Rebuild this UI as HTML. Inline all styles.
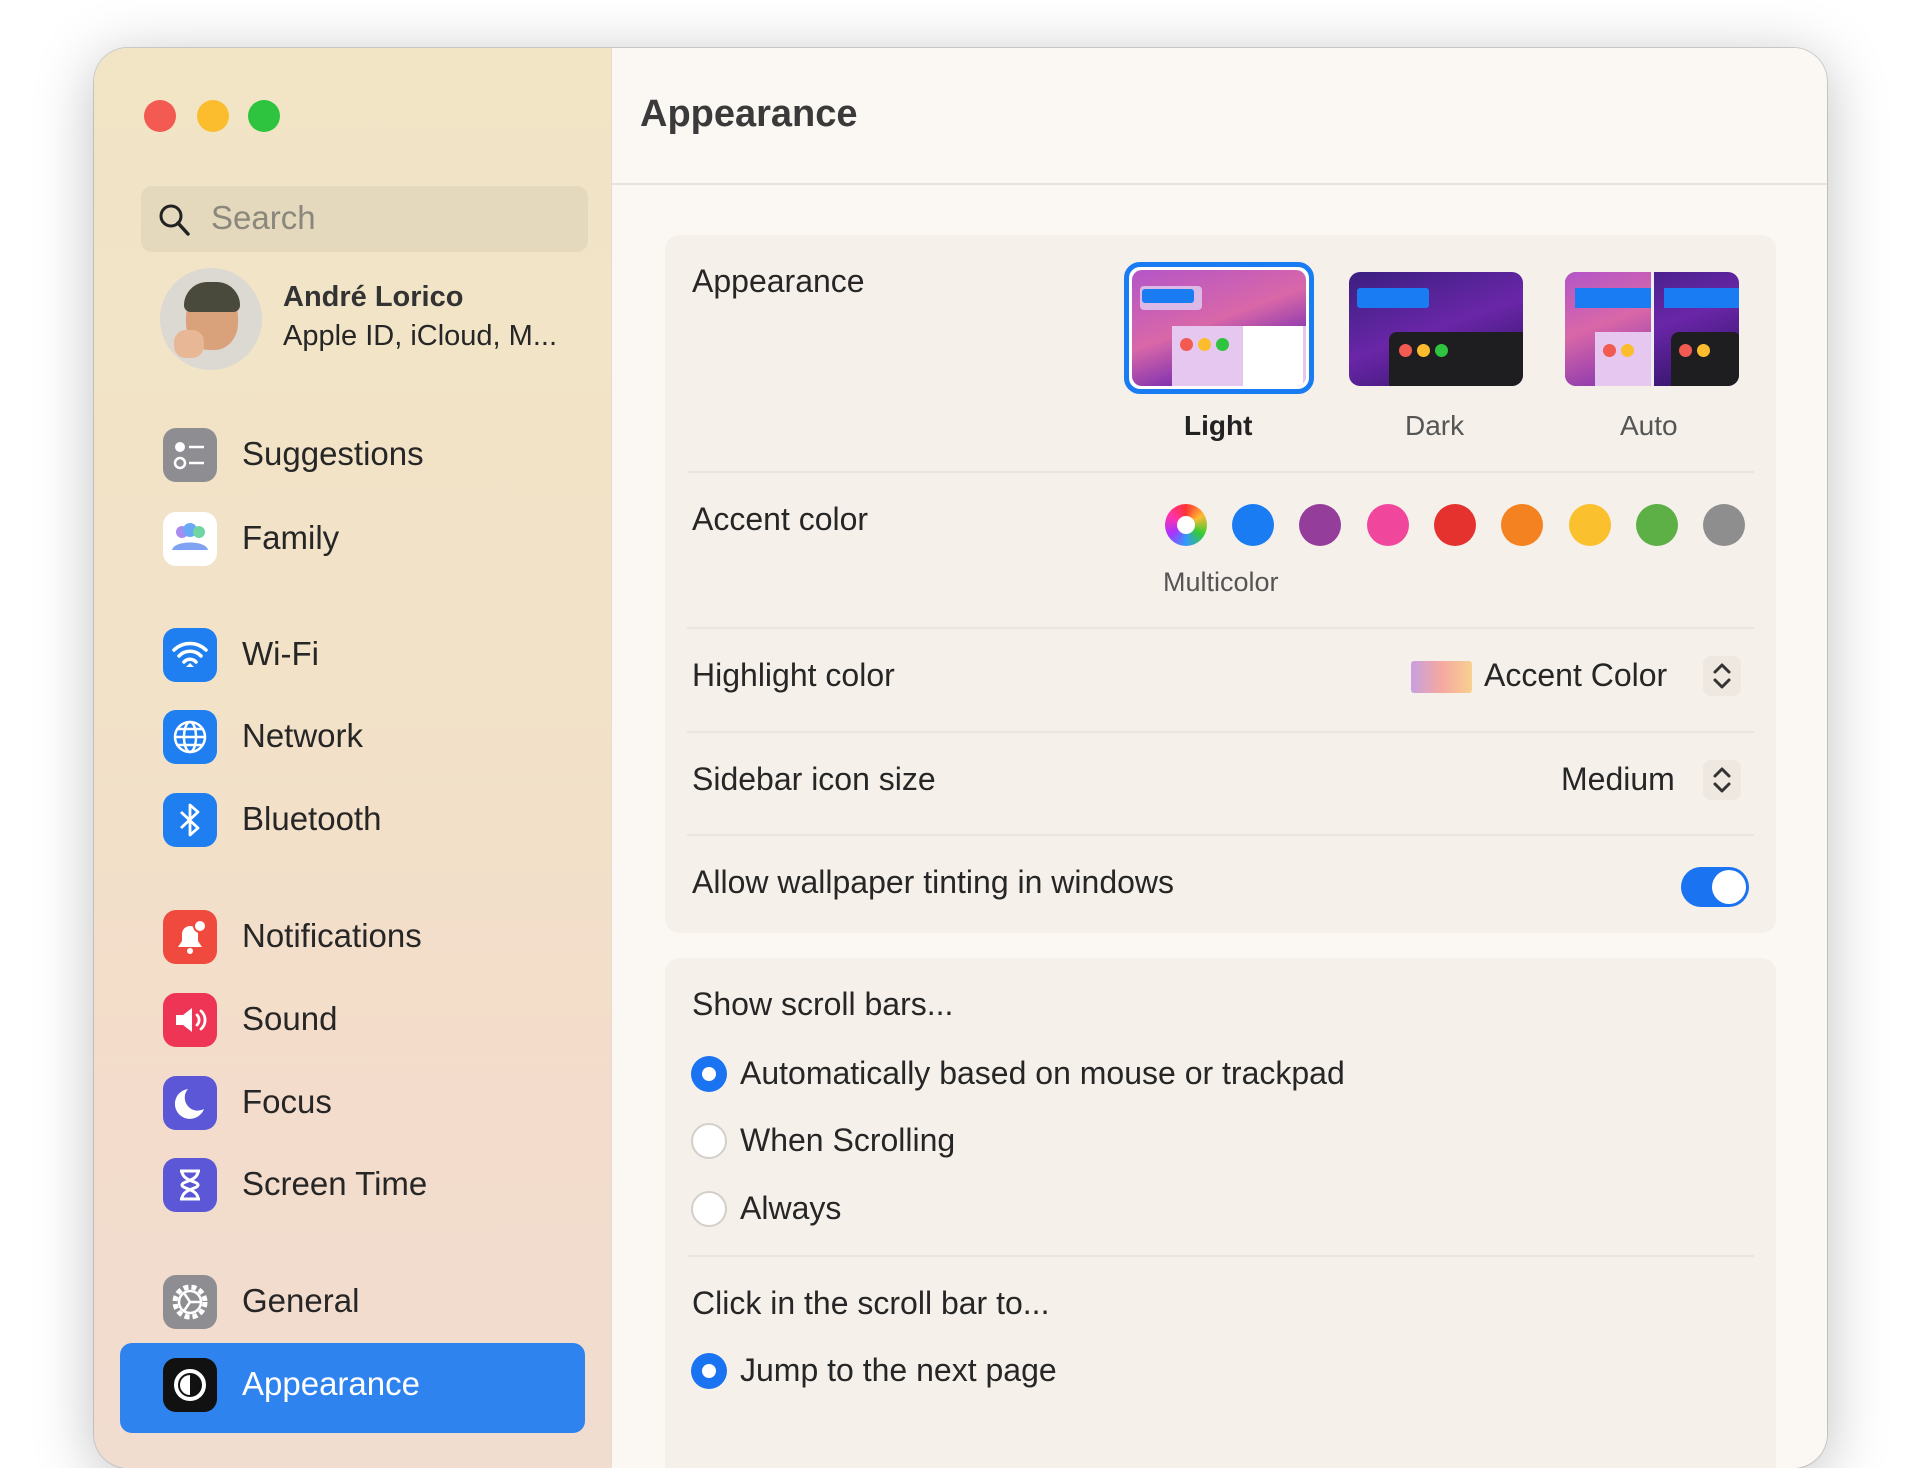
<!DOCTYPE html>
<html><head><meta charset="utf-8"><style>
*{margin:0;padding:0;box-sizing:border-box}
body{width:1920px;height:1426px;background:#fff;position:relative;overflow:hidden;font-family:"Liberation Sans",sans-serif;color:#222}
.win{position:absolute;left:94px;top:48px;width:1733px;height:1420px;border-radius:34px;overflow:hidden;box-shadow:0 10px 60px rgba(0,0,0,.25),0 0 0 1px rgba(0,0,0,.15);background:#fbf6ef}
.side{position:absolute;left:0;top:0;width:518px;height:100%;background:linear-gradient(180deg,#f1e5c6 0%,#f2e2c8 45%,#f3dccb 75%,#f1dcd0 100%);border-right:1px solid #e6dccf}
.abs{position:absolute}
.tl{position:absolute;top:52px;width:32px;height:32px;border-radius:50%}
.it{position:absolute;left:0;width:518px;height:60px}
.it .ic{position:absolute;left:69px;top:3px;width:54px;height:54px;border-radius:13px;display:flex;align-items:center;justify-content:center}
.it .tx{position:absolute;left:148px;top:10px;font-size:33px;color:#262626}
.main{position:absolute;left:518px;top:0;right:0;bottom:0;background:#fbf8f3}
.card{position:absolute;left:53px;width:1111px;background:#f5f0ea;border-radius:14px}
.lbl{position:absolute;font-size:32px;color:#262626;white-space:nowrap}
.div{position:absolute;left:22px;right:22px;height:2px;background:#ebe5dd}
.dot{position:absolute;width:42px;height:42px;border-radius:50%}
.radio{position:absolute;left:26px;width:36px;height:36px;border-radius:50%;border:2px solid #d4cfc8;background:#fff}
.radio.on{background:#1a73f0;border:none}
.radio.on:after{content:"";position:absolute;left:11px;top:11px;width:14px;height:14px;border-radius:50%;background:#fff}
</style></head><body>
<div class="win">
<div class="side">
 <div class="tl" style="left:50px;background:#f25a52"></div>
 <div class="tl" style="left:103px;background:#fbbd2e"></div>
 <div class="tl" style="left:154px;background:#2fc43f"></div>
 <div class="abs" style="left:47px;top:138px;width:447px;height:66px;border-radius:11px;background:#e4d9bd"></div>
 <svg class="abs" style="left:62px;top:153px" width="38" height="38" viewBox="0 0 38 38"><circle cx="15" cy="15" r="10" fill="none" stroke="#222" stroke-width="3"/><path d="M22 22 L32 33" stroke="#222" stroke-width="3.5" stroke-linecap="round"/></svg>
 <div class="abs" style="left:117px;top:151px;font-size:33px;color:#8c877c">Search</div>
 <div class="abs" style="left:66px;top:220px;width:102px;height:102px;border-radius:50%;background:#dcd8d2;overflow:hidden">
  <div class="abs" style="left:26px;top:22px;width:52px;height:60px;border-radius:45%;background:#d9a27a"></div>
  <div class="abs" style="left:24px;top:14px;width:56px;height:30px;border-radius:28px 28px 8px 8px;background:#4a4a3c"></div>
  <div class="abs" style="left:14px;top:62px;width:30px;height:28px;border-radius:12px;background:#e8b896"></div>
 </div>
 <div class="abs" style="left:189px;top:233px;font-size:29px;font-weight:bold;color:#333">André Lorico</div>
 <div class="abs" style="left:189px;top:272px;font-size:29px;color:#262626">Apple ID, iCloud, M...</div>

 <div class="it" style="top:377px"><div class="ic" style="background:#8e8e92"><svg width="40" height="40" viewBox="0 0 40 40"><circle cx="10" cy="12" r="5" fill="#fff"/><circle cx="10" cy="28" r="5" fill="none" stroke="#fff" stroke-width="2.5"/><path d="M19 12H34M19 28H34" stroke="#fff" stroke-width="2.5"/></svg></div><div class="tx">Suggestions</div></div>
 <div class="it" style="top:461px"><div class="ic" style="background:#fff"><svg width="44" height="34" viewBox="0 0 44 34"><circle cx="14" cy="10" r="6" fill="#a78bf0"/><circle cx="22" cy="8" r="7" fill="#6aa8f5"/><circle cx="31" cy="10" r="6" fill="#6fd6a3"/><path d="M4 28c2-10 34-10 36 0z" fill="#7fa3f2"/></svg></div><div class="tx">Family</div></div>
 <div class="it" style="top:577px"><div class="ic" style="background:#1f7ff0"><svg width="40" height="34" viewBox="0 0 40 34"><path d="M4 12a23 23 0 0 1 32 0M9 18a15 15 0 0 1 22 0M14 24a8 8 0 0 1 12 0" fill="none" stroke="#fff" stroke-width="3.5" stroke-linecap="round"/><path d="M16 29l4-4 4 4z" fill="#fff"/></svg></div><div class="tx">Wi-Fi</div></div>
 <div class="it" style="top:659px"><div class="ic" style="background:#1f7ff0"><svg width="40" height="40" viewBox="0 0 40 40" fill="none" stroke="#fff" stroke-width="2.5"><circle cx="20" cy="20" r="15"/><ellipse cx="20" cy="20" rx="6" ry="15"/><path d="M5 20h30M8 12h24M8 28h24"/></svg></div><div class="tx">Network</div></div>
 <div class="it" style="top:742px"><div class="ic" style="background:#1f7ff0"><svg width="30" height="40" viewBox="0 0 30 40"><path d="M6 12l17 16-8 7V5l8 7L6 28" fill="none" stroke="#fff" stroke-width="2.8" stroke-linejoin="round"/></svg></div><div class="tx">Bluetooth</div></div>
 <div class="it" style="top:859px"><div class="ic" style="background:#f04a3e"><svg width="40" height="40" viewBox="0 0 40 40"><path d="M8 30h24l-4-6V17a8 8 0 0 0-16 0v7z" fill="#fff"/><circle cx="20" cy="34" r="3" fill="#fff"/><circle cx="30" cy="9" r="6" fill="#fff" stroke="#f04a3e" stroke-width="2"/></svg></div><div class="tx">Notifications</div></div>
 <div class="it" style="top:942px"><div class="ic" style="background:#ee3556"><svg width="40" height="40" viewBox="0 0 40 40"><path d="M6 15h7l9-7v24l-9-7H6z" fill="#fff"/><path d="M27 15a7 7 0 0 1 0 10M31 11a12 12 0 0 1 0 18" fill="none" stroke="#fff" stroke-width="2.8" stroke-linecap="round"/></svg></div><div class="tx">Sound</div></div>
 <div class="it" style="top:1025px"><div class="ic" style="background:#5b57d6"><svg width="40" height="40" viewBox="0 0 40 40"><path d="M18 6a15 15 0 1 0 16 20A13 13 0 0 1 18 6z" fill="#fff"/></svg></div><div class="tx">Focus</div></div>
 <div class="it" style="top:1107px"><div class="ic" style="background:#5b57d6"><svg width="40" height="40" viewBox="0 0 40 40"><path d="M10 6h20M10 34h20M12 6c0 10 16 10 16 14S12 24 12 34M28 6c0 10-16 10-16 14s16 4 16 14" fill="none" stroke="#fff" stroke-width="3"/></svg></div><div class="tx">Screen Time</div></div>
 <div class="it" style="top:1224px"><div class="ic" style="background:#8e8e92"><svg width="44" height="44" viewBox="0 0 44 44" fill="none" stroke="#fff" stroke-width="2.5"><circle cx="22" cy="22" r="15" stroke-dasharray="5 3" stroke-width="5"/><circle cx="22" cy="22" r="11"/><path d="M22 22l-6-9M22 22l10 0M22 22l-6 9"/></svg></div><div class="tx">General</div></div>
 <div class="abs" style="left:26px;top:1295px;width:465px;height:90px;border-radius:12px;background:#2f83ef"></div>
 <div class="it" style="top:1307px"><div class="ic" style="background:#111"><svg width="40" height="40" viewBox="0 0 40 40"><circle cx="20" cy="20" r="14" fill="none" stroke="#fff" stroke-width="4"/><path d="M20 10a10 10 0 0 0 0 20z" fill="#fff"/></svg></div><div class="tx" style="color:#fff">Appearance</div></div>
</div>

<div class="main">
 <div class="abs" style="left:28px;top:45px;font-size:38px;font-weight:bold;color:#3a3a3a">Appearance</div>
 <div class="abs" style="left:0;right:0;top:135px;height:2px;background:#e9e2da"></div>

 <div class="card" style="top:187px;height:698px">
  <div class="lbl" style="left:27px;top:28px">Appearance</div>
  <div class="abs" style="left:459px;top:27px;width:190px;height:132px;border-radius:16px;border:5px solid #1a7cf2;background:#fff;padding:3px">
   <div style="position:relative;width:100%;height:100%;border-radius:10px;overflow:hidden;background:linear-gradient(160deg,#b456c8 0%,#d967a8 45%,#7a2fb0 75%,#3b1d8a 100%)">
    <div class="abs" style="left:8px;top:16px;width:62px;height:24px;border-radius:4px;background:#dcb8e6"></div>
    <div class="abs" style="left:10px;top:19px;width:52px;height:14px;border-radius:3px;background:#1a7cf2"></div>
    <div class="abs" style="left:40px;top:56px;width:150px;height:70px;background:#e6c7ef"></div>
    <div class="abs" style="left:111px;top:56px;width:60px;height:70px;background:#fff"></div>
    <div class="abs" style="left:48px;top:68px;width:13px;height:13px;border-radius:50%;background:#f25a52"></div>
    <div class="abs" style="left:66px;top:68px;width:13px;height:13px;border-radius:50%;background:#fbbd2e"></div>
    <div class="abs" style="left:84px;top:68px;width:13px;height:13px;border-radius:50%;background:#2fc43f"></div>
   </div>
  </div>
  <div class="abs" style="left:684px;top:37px;width:174px;height:114px;border-radius:11px;overflow:hidden;background:linear-gradient(160deg,#3a1f80,#6a26a8 50%,#2a1260)">
   <div class="abs" style="left:8px;top:16px;width:72px;height:20px;border-radius:3px;background:#1a7cf2"></div>
   <div class="abs" style="left:40px;top:60px;width:140px;height:60px;border-radius:8px;background:#1e1d20"></div>
   <div class="abs" style="left:50px;top:72px;width:13px;height:13px;border-radius:50%;background:#f25a52"></div>
   <div class="abs" style="left:68px;top:72px;width:13px;height:13px;border-radius:50%;background:#fbbd2e"></div>
   <div class="abs" style="left:86px;top:72px;width:13px;height:13px;border-radius:50%;background:#2fc43f"></div>
  </div>
  <div class="abs" style="left:900px;top:37px;width:174px;height:114px;border-radius:11px;overflow:hidden;background:linear-gradient(160deg,#3a1f80,#6a26a8 50%,#2a1260)">
   <div class="abs" style="left:0;top:0;width:87px;height:114px;background:linear-gradient(160deg,#b456c8,#d967a8 45%,#7a2fb0)"></div>
   <div class="abs" style="left:10px;top:16px;width:77px;height:20px;background:#1a7cf2"></div>
   <div class="abs" style="left:99px;top:16px;width:75px;height:20px;background:#1a7cf2"></div>
   <div class="abs" style="left:30px;top:60px;width:57px;height:60px;background:#e6c7ef"></div>
   <div class="abs" style="left:106px;top:60px;width:70px;height:60px;border-radius:8px;background:#1e1d20"></div>
   <div class="abs" style="left:86px;top:0;width:3px;height:114px;background:#eee"></div>
   <div class="abs" style="left:38px;top:72px;width:13px;height:13px;border-radius:50%;background:#f25a52"></div>
   <div class="abs" style="left:56px;top:72px;width:13px;height:13px;border-radius:50%;background:#fbbd2e"></div>
   <div class="abs" style="left:114px;top:72px;width:13px;height:13px;border-radius:50%;background:#f25a52"></div>
   <div class="abs" style="left:132px;top:72px;width:13px;height:13px;border-radius:50%;background:#fbbd2e"></div>
  </div>
  <div class="lbl" style="left:519px;top:175px;font-size:28px;font-weight:bold;color:#222">Light</div>
  <div class="lbl" style="left:740px;top:175px;font-size:28px;color:#555">Dark</div>
  <div class="lbl" style="left:955px;top:175px;font-size:28px;color:#555">Auto</div>
  <div class="div" style="top:236px"></div>

  <div class="lbl" style="left:27px;top:266px">Accent color</div>
  <div class="dot" style="left:500px;top:269px;background:conic-gradient(#f33,#fb3,#3c3,#39f,#a3f,#f3a,#f33)"><div style="position:absolute;left:12px;top:12px;width:18px;height:18px;border-radius:50%;background:#fff"></div></div>
  <div class="dot" style="left:567px;top:269px;background:#1a7cf2"></div>
  <div class="dot" style="left:634px;top:269px;background:#953d9b"></div>
  <div class="dot" style="left:702px;top:269px;background:#f0479c"></div>
  <div class="dot" style="left:769px;top:269px;background:#e5322e"></div>
  <div class="dot" style="left:836px;top:269px;background:#f58220"></div>
  <div class="dot" style="left:904px;top:269px;background:#fbc02d"></div>
  <div class="dot" style="left:971px;top:269px;background:#5cb045"></div>
  <div class="dot" style="left:1038px;top:269px;background:#8e8e8e"></div>
  <div class="lbl" style="left:498px;top:332px;font-size:27px;color:#555">Multicolor</div>
  <div class="div" style="top:392px"></div>

  <div class="lbl" style="left:27px;top:422px">Highlight color</div>
  <div class="abs" style="left:746px;top:426px;width:61px;height:32px;border-radius:3px;background:linear-gradient(90deg,#c7a0e0,#f5a8a0,#f8d090)"></div>
  <div class="lbl" style="left:819px;top:422px">Accent Color</div>
  <svg class="abs" style="left:1036px;top:419px" width="42" height="44" viewBox="0 0 42 44"><rect x="2" y="2" width="38" height="40" rx="8" fill="#eee8e1"/><path d="M14 18l7-7 7 7M14 26l7 7 7-7" fill="none" stroke="#333" stroke-width="3" stroke-linecap="round" stroke-linejoin="round"/></svg>
  <div class="div" style="top:496px"></div>

  <div class="lbl" style="left:27px;top:526px">Sidebar icon size</div>
  <div class="lbl" style="left:896px;top:526px">Medium</div>
  <svg class="abs" style="left:1036px;top:523px" width="42" height="44" viewBox="0 0 42 44"><rect x="2" y="2" width="38" height="40" rx="8" fill="#eee8e1"/><path d="M14 18l7-7 7 7M14 26l7 7 7-7" fill="none" stroke="#333" stroke-width="3" stroke-linecap="round" stroke-linejoin="round"/></svg>
  <div class="div" style="top:599px"></div>

  <div class="lbl" style="left:27px;top:629px">Allow wallpaper tinting in windows</div>
  <div class="abs" style="left:1016px;top:632px;width:68px;height:40px;border-radius:20px;background:#1a73f0"><div style="position:absolute;right:3px;top:3px;width:34px;height:34px;border-radius:50%;background:#fff"></div></div>
 </div>

 <div class="card" style="top:910px;height:560px">
  <div class="lbl" style="left:27px;top:28px">Show scroll bars...</div>
  <div class="radio on" style="top:98px"></div>
  <div class="lbl" style="left:75px;top:97px">Automatically based on mouse or trackpad</div>
  <div class="radio" style="top:165px"></div>
  <div class="lbl" style="left:75px;top:164px">When Scrolling</div>
  <div class="radio" style="top:233px"></div>
  <div class="lbl" style="left:75px;top:232px">Always</div>
  <div class="div" style="top:297px"></div>
  <div class="lbl" style="left:27px;top:327px">Click in the scroll bar to...</div>
  <div class="radio on" style="top:395px"></div>
  <div class="lbl" style="left:75px;top:394px">Jump to the next page</div>
 </div>
</div>
</div>
</body></html>
